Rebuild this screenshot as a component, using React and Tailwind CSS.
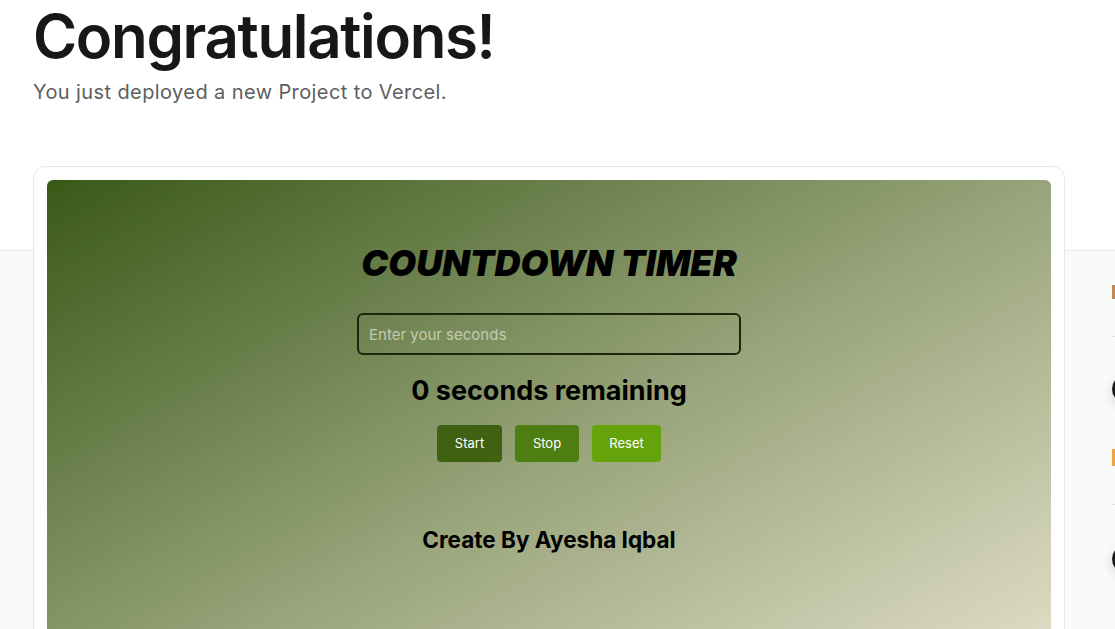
import { useState } from 'react'

const font = { fontFamily: 'Inter, "Noto Sans", sans-serif' }

function TimerPreview() {
  const [value, setValue] = useState('')

  return (
    <div className="h-[565px] rounded-md bg-gradient-to-br from-[#3a5916] via-[#98a47a] to-[#efe9d6] flex flex-col items-center pt-[63px]">
      <h2 className="text-[36px] leading-[40px] font-black italic text-black tracking-[0px]">
        COUNTDOWN TIMER
      </h2>
      <input
        value={value}
        onChange={e => setValue(e.target.value)}
        placeholder="Enter your seconds"
        className="mt-[30px] w-[384px] h-[42px] px-[10px] rounded-md border-2 border-[#1c260f] bg-transparent text-[15px] text-black placeholder:text-[#c3caae] outline-none"
      />
      <p className="mt-[19px] text-[27px] leading-[34px] font-bold text-black">0 seconds remaining</p>
      <div className="mt-[17px] flex gap-[13px]">
        <button className="w-[65px] h-[37px] rounded-[4px] bg-[#3e6112] text-white text-[13px]">Start</button>
        <button className="w-[64px] h-[37px] rounded-[4px] bg-[#4e7d12] text-white text-[13px]">Stop</button>
        <button className="w-[69px] h-[37px] rounded-[4px] bg-[#65a30d] text-white text-[13px]">Reset</button>
      </div>
      <p className="mt-[64px] text-[22.5px] leading-[28px] font-bold text-black">Create By Ayesha Iqbal</p>
    </div>
  )
}

export default function App() {
  return (
    <div className="h-screen overflow-hidden bg-[#fafafa]" style={font}>
      {/* Header */}
      <div className="h-[251px] bg-white border-b border-[#eaeaea] px-[33px] pt-[2px]">
        <h1 className="text-[60px] leading-[68px] font-semibold tracking-[-1.35px] text-[#171717]">Congratulations!</h1>
        <p className="mt-[8px] text-[20px] leading-[28px] tracking-[0.4px] text-[#5e5e5e]">You just deployed a new Project to Vercel.</p>
      </div>

      {/* Preview card + side column */}
      <div className="-mt-[85px] flex pl-[33px]">
        <div className="w-[1032px] shrink-0 rounded-xl border border-[#e8e8e8] bg-white p-[13px]">
          <TimerPreview />
        </div>

        <div className="ml-[47px] shrink-0 w-[200px] flex flex-col">
          <div className="mt-[119px] w-[20px] h-[14px] bg-[#c58a52]" />
          <div className="mt-[37px] h-px w-[120px] bg-[#e2e2e2]" />
          <div className="mt-[38px] w-[28px] h-[28px] rounded-full bg-[#1a1a1a] shadow-[0_4px_12px_rgba(0,0,0,0.15)]" />
          <div className="mt-[46px] w-[20px] h-[17px] bg-[#f0a43a]" />
          <div className="mt-[38px] h-px w-[120px] bg-[#e2e2e2]" />
          <div className="mt-[40px] w-[28px] h-[28px] rounded-full bg-[#1a1a1a] shadow-[0_4px_12px_rgba(0,0,0,0.15)]" />
        </div>
      </div>
    </div>
  )
}
